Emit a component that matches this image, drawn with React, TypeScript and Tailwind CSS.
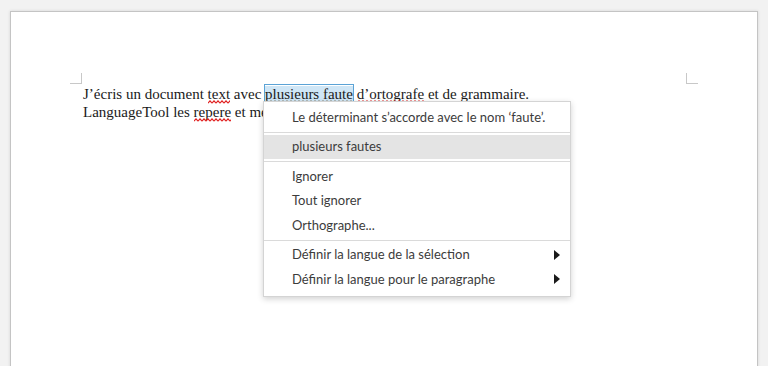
import { ReactNode } from 'react'

const serif = { fontFamily: '"Liberation Serif", "Times New Roman", serif' }
const ui = { fontFamily: 'Lato, "Noto Sans", sans-serif' }

type Item = { label: string; highlighted?: boolean; submenu?: boolean }

const MenuRow = ({ label, highlighted, submenu }: Item) => (
  <div className={'flex h-[24.5px] items-center justify-between whitespace-nowrap pl-[28px] pr-[10px] ' + (highlighted ? 'bg-[#e4e4e4]' : '')}>
    <span>{label}</span>
    {submenu && (
      <svg width="6" height="10" viewBox="0 0 6 10">
        <path d="M0 0 L6 5 L0 10 Z" fill="#1a1a1a" />
      </svg>
    )}
  </div>
)

const Separator = () => <div className="my-[2px] h-px bg-[#dadada]" />

const ContextMenu = () => (
  <div
    style={ui}
    className="absolute left-[263px] top-[101px] w-[308px] border border-[#d4d4d4] bg-white pb-[4px] pt-[3px] text-[13px] text-[#3c3c3c] shadow-[0_2px_6px_rgba(0,0,0,0.18)]"
  >
    <MenuRow label="Le déterminant s’accorde avec le nom ‘faute’." />
    <Separator />
    <MenuRow label="plusieurs fautes" highlighted />
    <Separator />
    <MenuRow label="Ignorer" />
    <MenuRow label="Tout ignorer" />
    <MenuRow label="Orthographe..." />
    <Separator />
    <MenuRow label="Définir la langue de la sélection" submenu />
    <MenuRow label="Définir la langue pour le paragraphe" submenu />
  </div>
)

// wavy underline drawn as svg, browser wavy decoration is unreliable here
const Squiggle = ({ children, color }: { children: ReactNode; color: string }) => (
  <span className="relative inline-block">
    {children}
    <svg className="absolute left-0 top-[15px] h-[4px] w-full" preserveAspectRatio="none">
      <defs>
        <pattern id={'w' + color.slice(1)} width="4" height="4" patternUnits="userSpaceOnUse">
          <path d="M0 3.2 L2 0.8 L4 3.2" fill="none" stroke={color} strokeWidth="1.1" />
        </pattern>
      </defs>
      <rect width="100%" height="4" fill={'url(#w' + color.slice(1) + ')'} />
    </svg>
  </span>
)

export default function App() {
  return (
    <div className="relative h-[366px] w-[768px] overflow-hidden bg-[#f2f2f2]">
      <div className="ml-[10px] mt-[11px] h-[360px] w-[748px] border border-[#c4c4c4] bg-white shadow-[0_0_3px_rgba(0,0,0,0.12)]">
        <div className="relative h-full">
          {/* margin corner marks */}
          <div className="absolute left-[59px] top-[61px] h-[11px] w-[12px] border-b border-r border-[#c8c8c8]" />
          <div className="absolute left-[675px] top-[61px] h-[11px] w-[12px] border-b border-l border-[#c8c8c8]" />
          <div style={serif} className="absolute left-[72px] top-[73px] whitespace-nowrap text-[15px] leading-[18px] text-[#1a1a1a]">
            <div>
              J’écris un document <Squiggle color="#e02020">text</Squiggle> avec{' '}
              <span className="bg-[#cfe6f6] pb-px outline outline-1 outline-[#5ba3d6]">
                <Squiggle color="#8c8878">plusieurs faute</Squiggle>
              </span>{' '}
              <Squiggle color="#e02020">d’ortografe</Squiggle> et de grammaire.
            </div>
            <div>
              LanguageTool les <Squiggle color="#e02020">repere</Squiggle> et me les signale.
            </div>
          </div>
        </div>
      </div>
      <ContextMenu />
    </div>
  )
}
